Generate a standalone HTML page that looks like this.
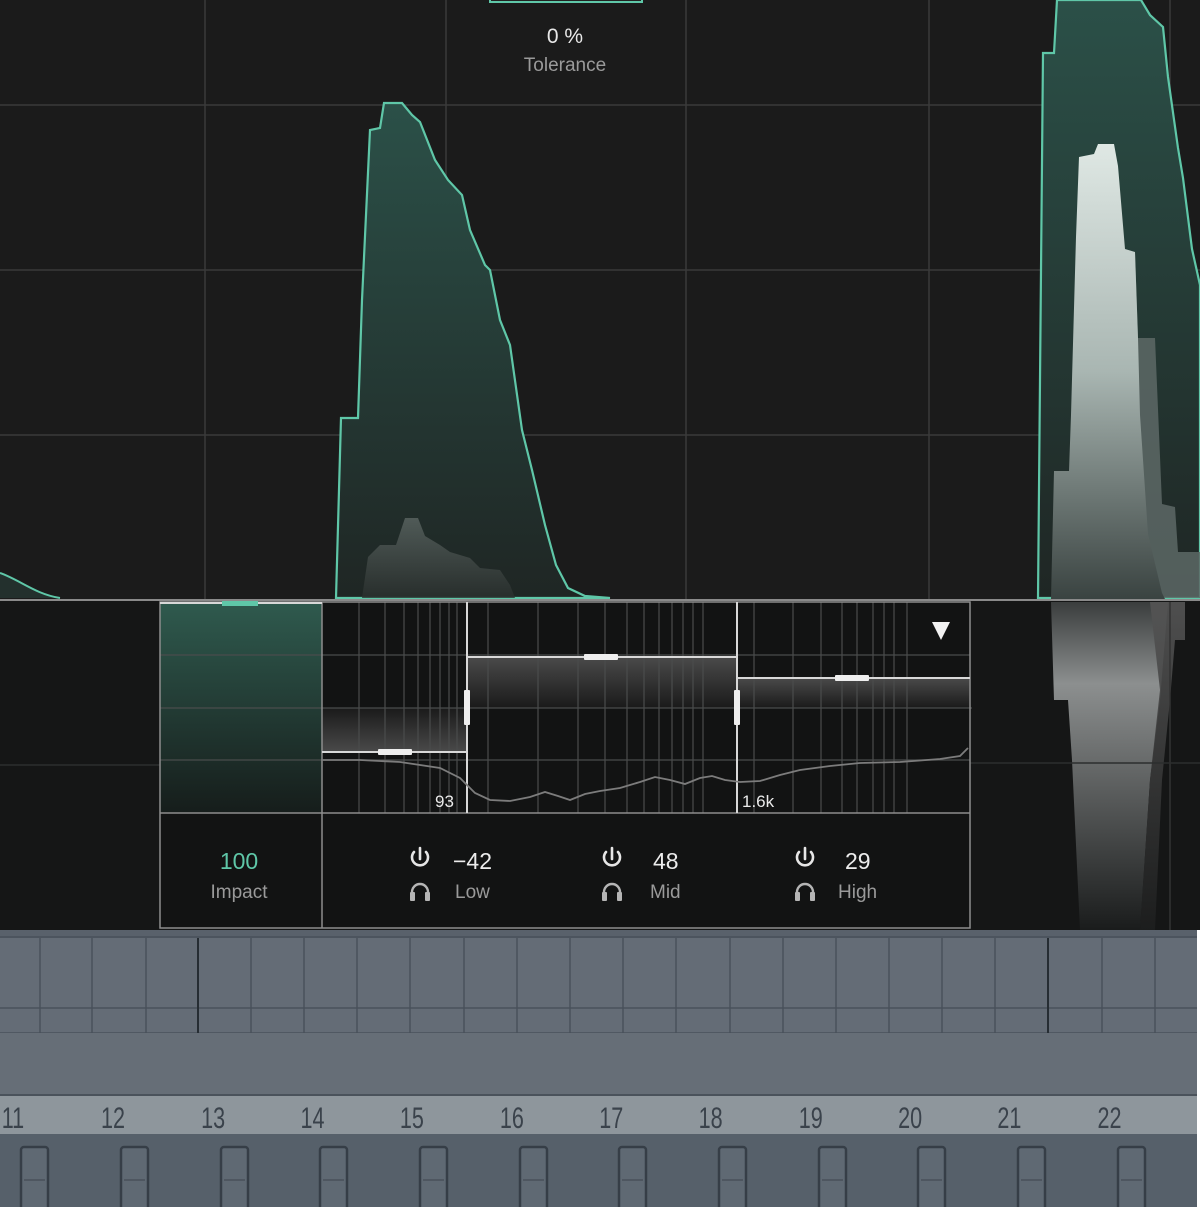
<!DOCTYPE html>
<html><head><meta charset="utf-8"><style>
html,body{margin:0;padding:0;background:#fff}
body{width:1200px;height:1210px;overflow:hidden;position:relative;font-family:"Liberation Sans",sans-serif}
svg{position:absolute;left:0;top:0}
</style></head><body>
<svg width="1200" height="1210" viewBox="0 0 1200 1210" xmlns="http://www.w3.org/2000/svg">
<defs>
<linearGradient id="gfill" x1="0" y1="0" x2="0" y2="1"><stop offset="0" stop-color="#2b5048"/><stop offset="1" stop-color="#1f2624"/></linearGradient>
<linearGradient id="wfill" x1="0" y1="0" x2="0" y2="1"><stop offset="0" stop-color="#dfe8e4"/><stop offset="0.5" stop-color="#a9b6b2"/><stop offset="1" stop-color="#3a4341"/></linearGradient>
<linearGradient id="gray1" x1="0" y1="0" x2="0" y2="1"><stop offset="0" stop-color="#5c6663"/><stop offset="1" stop-color="#2a302e"/></linearGradient>
<linearGradient id="imp" x1="0" y1="0" x2="0" y2="1"><stop offset="0" stop-color="#2f5a4e"/><stop offset="1" stop-color="#161d1b"/></linearGradient>
<linearGradient id="band" x1="0" y1="0" x2="0" y2="1"><stop offset="0" stop-color="#4a4a4a"/><stop offset="1" stop-color="#1a1a1a"/></linearGradient>
<linearGradient id="bandL" x1="0" y1="0" x2="0" y2="1"><stop offset="0" stop-color="#1a1a1a"/><stop offset="1" stop-color="#4a4a4a"/></linearGradient>
<linearGradient id="mir" x1="0" y1="0" x2="0" y2="1"><stop offset="0" stop-color="#3a3d3d"/><stop offset="0.25" stop-color="#8c8f8f"/><stop offset="1" stop-color="#1a1c1c"/></linearGradient>
<linearGradient id="mir2" x1="0" y1="0" x2="0" y2="1"><stop offset="0" stop-color="#555"/><stop offset="1" stop-color="#1d1e1e"/></linearGradient>
<filter id="sh"><feGaussianBlur stdDeviation="4"/></filter>
</defs>
<!-- main background -->
<rect x="0" y="0" width="1200" height="600" fill="#1b1b1b"/>
<g stroke="#3a3a3a" stroke-width="1.5">
<line x1="205" y1="0" x2="205" y2="600"/><line x1="446" y1="0" x2="446" y2="600"/><line x1="686" y1="0" x2="686" y2="600"/><line x1="929" y1="0" x2="929" y2="600"/><line x1="1170" y1="0" x2="1170" y2="600"/>
<line x1="0" y1="105" x2="1200" y2="105"/><line x1="0" y1="270" x2="1200" y2="270"/><line x1="0" y1="435" x2="1200" y2="435"/>
</g>
<!-- tolerance button -->
<rect x="490" y="-10" width="152" height="12" fill="#222" stroke="#5fc7a8" stroke-width="2"/>
<text x="565" y="43" fill="#e8e8e8" font-size="21" text-anchor="middle">0 %</text>
<text x="565" y="71" fill="#9a9a9a" font-size="19" text-anchor="middle">Tolerance</text>
<!-- left tail -->
<path d="M0,573 C20,580 35,594 60,598 L0,598Z" fill="#23302d"/>
<path d="M0,573 C20,580 35,594 60,598" fill="none" stroke="#5fc7a8" stroke-width="2"/>
<!-- peak 1 -->
<path d="M336,598 L341,418 L358,418 L362,300 L370,130 L380,128 L384,103 L402,103 L412,115 L420,122 L435,160 L448,180 L462,195 L470,230 L485,265 L490,270 L500,320 L510,345 L522,430 L532,470 L545,525 L556,565 L568,588 L585,596 L610,598Z" fill="url(#gfill)" stroke="#5fc7a8" stroke-width="2.2"/>
<path d="M362,598 L368,557 L380,545 L396,545 L405,518 L418,518 L425,536 L440,545 L450,552 L470,558 L480,568 L500,570 L510,585 L515,598Z" fill="url(#gray1)" opacity="0.8"/>
<!-- right peak -->
<path d="M1038,598 L1043,53 L1054,53 L1057,0 L1141,0 L1150,15 L1163,27 L1168,77 L1178,148 L1183,178 L1192,249 L1200,285 L1200,598Z" fill="url(#gfill)" stroke="#5fc7a8" stroke-width="2.2"/>
<path d="M1135,252 L1138,338 L1155,338 L1162,504 L1175,507 L1178,552 L1200,552 L1200,598 L1135,598Z" fill="#5d6866" opacity="0.85"/>
<path d="M1051,599 L1054,471 L1069,471 L1071,415 L1076,237 L1079,157 L1094,154 L1098,144 L1114,144 L1118,166 L1125,249 L1135,252 L1138,338 L1140,415 L1148,534 L1162,593 L1165,599Z" fill="url(#wfill)"/>
<!-- lower section bg -->
<rect x="0" y="600" width="1200" height="330" fill="#151616"/>
<line x1="0" y1="600" x2="1200" y2="600" stroke="#8a8a8a" stroke-width="2"/>
<line x1="0" y1="765" x2="160" y2="765" stroke="#2c2e2e" stroke-width="1.5"/>
<!-- mirror right -->
<path d="M1051,602 L1054,700 L1068,700 L1072,760 L1080,930 L1140,930 L1150,780 L1160,700 L1168,602Z" fill="url(#mir)"/>
<path d="M1150,602 L1185,602 L1185,640 L1175,640 L1170,700 L1162,780 L1155,930 L1140,930 L1150,780 L1160,690Z" fill="url(#mir2)" opacity="0.9"/>
<line x1="1170" y1="602" x2="1170" y2="930" stroke="#333" stroke-width="1.5"/>
<line x1="970" y1="763" x2="1200" y2="763" stroke="#2c2e2e" stroke-width="1.5"/>
<!-- panel -->
<rect x="160" y="602" width="810" height="326" fill="#121313"/>
<rect x="160" y="602" width="162" height="211" fill="url(#imp)"/>
<!-- bands -->
<rect x="322" y="708" width="145" height="44" fill="url(#bandL)"/>
<rect x="467" y="657" width="270" height="51" fill="url(#band)"/>
<rect x="737" y="678" width="233" height="30" fill="url(#band)"/>
<g stroke="#4a4c4c" stroke-width="1.2">
<line x1="359" y1="602" x2="359" y2="813"/><line x1="385" y1="602" x2="385" y2="813"/><line x1="404" y1="602" x2="404" y2="813"/><line x1="418" y1="602" x2="418" y2="813"/><line x1="430" y1="602" x2="430" y2="813"/><line x1="440" y1="602" x2="440" y2="813"/><line x1="449" y1="602" x2="449" y2="813"/><line x1="457" y1="602" x2="457" y2="813"/>
<line x1="488" y1="602" x2="488" y2="813"/><line x1="538" y1="602" x2="538" y2="813"/><line x1="578" y1="602" x2="578" y2="813"/><line x1="605" y1="602" x2="605" y2="813"/><line x1="627" y1="602" x2="627" y2="813"/><line x1="644" y1="602" x2="644" y2="813"/><line x1="659" y1="602" x2="659" y2="813"/><line x1="672" y1="602" x2="672" y2="813"/><line x1="683" y1="602" x2="683" y2="813"/><line x1="693" y1="602" x2="693" y2="813"/><line x1="703" y1="602" x2="703" y2="813"/>
<line x1="754" y1="602" x2="754" y2="813"/><line x1="793" y1="602" x2="793" y2="813"/><line x1="821" y1="602" x2="821" y2="813"/><line x1="842" y1="602" x2="842" y2="813"/><line x1="857" y1="602" x2="857" y2="813"/><line x1="873" y1="602" x2="873" y2="813"/><line x1="884" y1="602" x2="884" y2="813"/><line x1="894" y1="602" x2="894" y2="813"/><line x1="907" y1="602" x2="907" y2="813"/>
<line x1="160" y1="655" x2="970" y2="655"/><line x1="160" y1="708" x2="972" y2="708"/><line x1="160" y1="760" x2="970" y2="760"/>
</g>
<g stroke="#8d8d8d" stroke-width="1.5" fill="none">
<rect x="160" y="602" width="810" height="326"/>
<line x1="322" y1="602" x2="322" y2="928"/>
<line x1="160" y1="813" x2="970" y2="813"/>
</g>
<g stroke="#d8d8d8" stroke-width="2">
<line x1="467" y1="602" x2="467" y2="813"/><line x1="737" y1="602" x2="737" y2="813"/>
<line x1="322" y1="752" x2="467" y2="752"/><line x1="467" y1="657" x2="737" y2="657"/><line x1="737" y1="678" x2="970" y2="678"/>
<line x1="160" y1="603" x2="322" y2="603"/>
</g>
<rect x="222" y="601" width="36" height="5" fill="#5fc7a8"/>
<rect x="378" y="749" width="34" height="6" rx="1" fill="#eee"/>
<rect x="584" y="654" width="34" height="6" rx="1" fill="#eee"/>
<rect x="835" y="675" width="34" height="6" rx="1" fill="#eee"/>
<rect x="464" y="690" width="6" height="35" rx="1" fill="#eee"/>
<rect x="734" y="690" width="6" height="35" rx="1" fill="#eee"/>
<path d="M322,760 L360,760 L400,762 L440,768 L460,778 L475,793 L490,800 L510,801 L530,797 L545,792 L558,796 L570,800 L585,794 L600,791 L620,788 L640,782 L655,777 L670,780 L685,784 L700,778 L712,776 L725,780 L740,782 L760,781 L780,775 L800,770 L830,766 L860,763 L900,762 L940,759 L960,756 L968,748" fill="none" stroke="#7c7c7c" stroke-width="1.8"/>
<path d="M932,622 L950,622 L941,640Z" fill="#f2f2f2"/>
<text x="435" y="807" fill="#eaeaea" font-size="17">93</text>
<text x="742" y="807" fill="#eaeaea" font-size="17">1.6k</text>
<!-- controls -->
<text x="239" y="869" fill="#5fc7a8" font-size="23" text-anchor="middle">100</text>
<text x="239" y="898" fill="#9a9a9a" font-size="19" text-anchor="middle">Impact</text>
<g fill="none" stroke="#e6e6e6" stroke-width="2.6" stroke-linecap="round">
<path d="M414,852 A8,8 0 1 0 426,852 M420,848 L420,859"/>
<path d="M606,852 A8,8 0 1 0 618,852 M612,848 L612,859"/>
<path d="M799,852 A8,8 0 1 0 811,852 M805,848 L805,859"/>
</g>
<g fill="none" stroke="#b5b5b5" stroke-width="2.4">
<path d="M412,900 L412,892 A8,8 0 0 1 428,892 L428,900"/>
<path d="M604,900 L604,892 A8,8 0 0 1 620,892 L620,900"/>
<path d="M797,900 L797,892 A8,8 0 0 1 813,892 L813,900"/>
</g>
<g fill="#b5b5b5"><rect x="410" y="892" width="5" height="9" rx="1"/><rect x="425" y="892" width="5" height="9" rx="1"/><rect x="602" y="892" width="5" height="9" rx="1"/><rect x="617" y="892" width="5" height="9" rx="1"/><rect x="795" y="892" width="5" height="9" rx="1"/><rect x="810" y="892" width="5" height="9" rx="1"/></g>
<g fill="#ececec" font-size="23"><text x="453" y="869">−42</text><text x="653" y="869">48</text><text x="845" y="869">29</text></g>
<g fill="#9a9a9a" font-size="19"><text x="455" y="898">Low</text><text x="650" y="898">Mid</text><text x="838" y="898">High</text></g>
<!-- DAW -->
<rect x="0" y="930" width="1200" height="280" fill="#646c76"/>
<rect x="0" y="930" width="1200" height="8" fill="#59616b"/>
<line x1="0" y1="937" x2="1200" y2="937" stroke="#48505a" stroke-width="1.5"/>
<g stroke="#49515b" stroke-width="1.5">
<line x1="40" y1="938" x2="40" y2="1033"/><line x1="92" y1="938" x2="92" y2="1033"/><line x1="146" y1="938" x2="146" y2="1033"/>
<line x1="251" y1="938" x2="251" y2="1033"/><line x1="304" y1="938" x2="304" y2="1033"/><line x1="357" y1="938" x2="357" y2="1033"/><line x1="410" y1="938" x2="410" y2="1033"/><line x1="464" y1="938" x2="464" y2="1033"/><line x1="517" y1="938" x2="517" y2="1033"/><line x1="570" y1="938" x2="570" y2="1033"/><line x1="623" y1="938" x2="623" y2="1033"/><line x1="676" y1="938" x2="676" y2="1033"/><line x1="730" y1="938" x2="730" y2="1033"/><line x1="783" y1="938" x2="783" y2="1033"/><line x1="836" y1="938" x2="836" y2="1033"/><line x1="889" y1="938" x2="889" y2="1033"/><line x1="942" y1="938" x2="942" y2="1033"/><line x1="995" y1="938" x2="995" y2="1033"/><line x1="1102" y1="938" x2="1102" y2="1033"/><line x1="1155" y1="938" x2="1155" y2="1033"/>
<line x1="0" y1="1008" x2="1200" y2="1008"/><line x1="0" y1="1033" x2="1200" y2="1033"/>
</g>
<g stroke="#262d33" stroke-width="2"><line x1="198" y1="938" x2="198" y2="1033"/><line x1="1048" y1="938" x2="1048" y2="1033"/></g>
<rect x="0" y="1033" width="1200" height="62" fill="#666e77"/>
<line x1="0" y1="1095" x2="1200" y2="1095" stroke="#4a525b" stroke-width="2"/>
<rect x="0" y="1096" width="1200" height="38" fill="#8e969c"/>
<g fill="#3a424b" font-size="30" font-family="'Liberation Sans Narrow','Liberation Sans',sans-serif" text-anchor="middle" transform="scale(0.72,1)">
<text x="18" y="1128">11</text><text x="157" y="1128">12</text><text x="296" y="1128">13</text><text x="434" y="1128">14</text><text x="572" y="1128">15</text><text x="711" y="1128">16</text><text x="849" y="1128">17</text><text x="987" y="1128">18</text><text x="1126" y="1128">19</text><text x="1264" y="1128">20</text><text x="1402" y="1128">21</text><text x="1541" y="1128">22</text>
</g>
<rect x="0" y="1134" width="1200" height="76" fill="#56606a"/>
<g fill="#5f6973" stroke="#363e47" stroke-width="2.5">
<rect x="21" y="1147" width="27" height="70" rx="3"/><rect x="121" y="1147" width="27" height="70" rx="3"/><rect x="221" y="1147" width="27" height="70" rx="3"/><rect x="320" y="1147" width="27" height="70" rx="3"/><rect x="420" y="1147" width="27" height="70" rx="3"/><rect x="520" y="1147" width="27" height="70" rx="3"/><rect x="619" y="1147" width="27" height="70" rx="3"/><rect x="719" y="1147" width="27" height="70" rx="3"/><rect x="819" y="1147" width="27" height="70" rx="3"/><rect x="918" y="1147" width="27" height="70" rx="3"/><rect x="1018" y="1147" width="27" height="70" rx="3"/><rect x="1118" y="1147" width="27" height="70" rx="3"/>
</g>
<g stroke="#48515a" stroke-width="1.5">
<line x1="24" y1="1180" x2="45" y2="1180"/><line x1="124" y1="1180" x2="145" y2="1180"/><line x1="224" y1="1180" x2="245" y2="1180"/><line x1="323" y1="1180" x2="344" y2="1180"/><line x1="423" y1="1180" x2="444" y2="1180"/><line x1="523" y1="1180" x2="544" y2="1180"/><line x1="622" y1="1180" x2="643" y2="1180"/><line x1="722" y1="1180" x2="743" y2="1180"/><line x1="822" y1="1180" x2="843" y2="1180"/><line x1="921" y1="1180" x2="942" y2="1180"/><line x1="1021" y1="1180" x2="1042" y2="1180"/><line x1="1121" y1="1180" x2="1142" y2="1180"/>
</g>
<rect x="0" y="1207" width="1200" height="3" fill="#fff"/>
<rect x="1197" y="930" width="3" height="280" fill="#fff"/>
</svg>
</body></html>
